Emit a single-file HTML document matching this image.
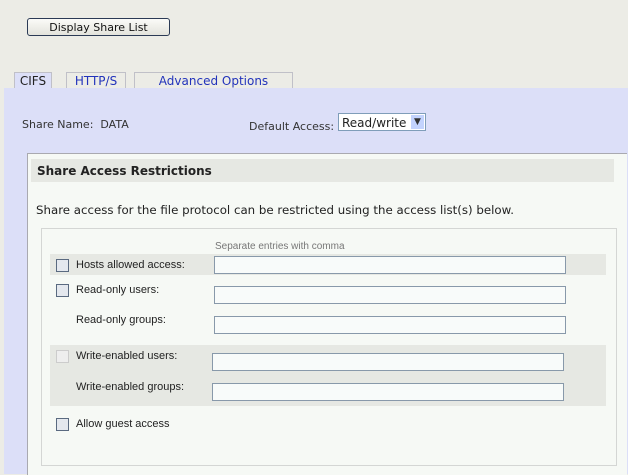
<!DOCTYPE html>
<html><head><style>
body{margin:0;width:628px;height:474px;overflow:hidden;background:#ecece6;font-family:Verdana,"DejaVu Sans",sans-serif;position:relative}
.a{position:absolute}
.btn{left:27px;top:18px;width:141px;height:16px;border:1px solid #2b3a55;border-radius:3px;background:linear-gradient(#fbfbf8,#e3e3dc);font-size:11px;text-align:center;line-height:17px;color:#111}
.tab{top:72px;height:16px;background:#ecece6;border:1px solid #c0c0c8;border-bottom:none;font-size:12px;text-align:center;line-height:17px;color:#2233bb}
.lav{left:4px;top:88px;width:624px;height:386px;background:#dcdff8}
.white{left:27px;top:153px;width:599px;height:321px;background:#f6f9f5;border-left:1px solid #a9a9b0;border-top:1px solid #a9a9b0}
.hdr{left:31px;top:159px;width:583px;height:23px;background:#e6e8e3;font-weight:bold;font-size:12px;line-height:25px;padding-left:6px;box-sizing:border-box;color:#222}
.lbl{font-family:"Liberation Sans",Arial,sans-serif;font-size:11px;color:#222}
.inp{left:214px;width:350px;height:16px;border:1px solid #8899aa;background:#f8fbfa}
.cb{left:56px;width:11px;height:11px;border:1px solid #5a6a80;background:#e4e8ee}
.band{left:50px;width:556px;background:#e6e8e3}
</style></head><body>
<div class="a btn">Display Share List</div>
<div class="a tab" style="left:14px;width:36px;color:#222;background:#dcdff8;height:17px">CIFS</div>
<div class="a tab" style="left:66px;width:58px">HTTP/S</div>
<div class="a tab" style="left:134px;width:157px">Advanced Options</div>
<div class="a lav"></div>
<div class="a" style="left:22px;top:118px;font-size:11px;color:#333">Share Name:&nbsp; DATA</div>
<div class="a" style="left:249px;top:120px;font-size:11px;color:#333">Default Access:</div>
<div class="a" style="left:338px;top:113px;width:88px;height:18px;border:1px solid #7f9db9;background:#fff;font-size:12px;line-height:18px;padding-left:3px;box-sizing:border-box;color:#222">Read/write<span style="position:absolute;right:1px;top:1px;width:13px;height:14px;background:#c3d3fd;font-size:9px;line-height:14px;text-align:center;color:#333">&#9660;</span></div>
<div class="a white"></div>
<div class="a hdr">Share Access Restrictions</div>
<div class="a" style="left:36px;top:203px;font-size:11.8px;color:#222">Share access for the file protocol can be restricted using the access list(s) below.</div>
<div class="a" style="left:41px;top:228px;width:574px;height:236px;border:1px solid #d4d6d4"></div>
<div class="a lbl" style="left:215px;top:241px;font-size:10px;color:#777">Separate entries with comma</div>
<div class="a band" style="top:254px;height:21px"></div>
<div class="a band" style="top:345px;height:61px"></div>
<div class="a cb" style="top:259px"></div><div class="a lbl" style="left:76px;top:259px">Hosts allowed access:</div><div class="a inp" style="top:256px"></div>
<div class="a cb" style="top:284px"></div><div class="a lbl" style="left:76px;top:284px">Read-only users:</div><div class="a inp" style="top:286px"></div>
<div class="a lbl" style="left:76px;top:314px">Read-only groups:</div><div class="a inp" style="top:316px"></div>
<div class="a cb" style="top:350px;border-color:#ccc;background:#eee"></div><div class="a lbl" style="left:76px;top:350px">Write-enabled users:</div><div class="a inp" style="top:353px;left:212px"></div>
<div class="a lbl" style="left:76px;top:381px">Write-enabled groups:</div><div class="a inp" style="top:383px;left:212px"></div>
<div class="a cb" style="top:418px"></div><div class="a lbl" style="left:76px;top:418px">Allow guest access</div>
</body></html>
